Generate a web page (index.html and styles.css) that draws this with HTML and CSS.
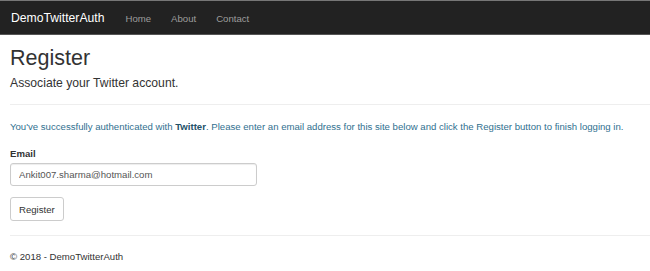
FILE: index.html
```html
<!DOCTYPE html>
<html>
<head>
<meta charset="utf-8">
<title>Register - DemoTwitterAuth</title>
<link rel="stylesheet" href="styles.css">
</head>
<body>
<nav class="navbar">
  <a class="brand" href="#">DemoTwitterAuth</a>
  <ul class="nav">
    <li><a href="#">Home</a></li>
    <li><a href="#">About</a></li>
    <li><a href="#">Contact</a></li>
  </ul>
</nav>
<div class="container">
  <h2 class="title">Register</h2>
  <h4 class="subtitle">Associate your Twitter account.</h4>
  <hr class="rule">
  <p class="info">You've successfully authenticated with <strong>Twitter</strong>. Please enter an email address for this site below and click the Register button to finish logging in.</p>
  <form class="form">
    <div class="form-group">
      <label class="label" for="email">Email</label>
      <input class="input" id="email" type="text" value="Ankit007.sharma@hotmail.com">
    </div>
    <button class="btn" type="button">Register</button>
  </form>
  <hr class="rule">
  <footer class="footer">
    <p class="copy">© 2018 - DemoTwitterAuth</p>
  </footer>
</div>
</body>
</html>
```

FILE: styles.css
```css
* { box-sizing: border-box; }
html, body { margin: 0; padding: 0; }
body {
  font-family: "Liberation Sans", Arial, sans-serif;
  font-size: 9.6px;
  line-height: 1.42857;
  color: #333;
  background: #fff;
}
.navbar {
  display: flex;
  align-items: center;
  height: 35px;
  background: #222;
  border-top: 1px solid #777;
  border-bottom: 1px solid #555;
  padding: 2px 10px 0;
}
.brand {
  color: #fff;
  font-size: 12.2px;
  text-decoration: none;
  margin-right: 11px;
  padding-left: 1px;
}
.nav {
  display: flex;
  list-style: none;
  margin: 0;
  padding: 0;
}
.nav li a {
  display: block;
  padding: 0 10px;
  color: #9d9d9d;
  text-decoration: none;
  font-size: 9.6px;
}
.container {
  padding: 0 0 0 10px;
}
.title {
  font-size: 21.5px;
  font-weight: 500;
  line-height: 1.1;
  margin: 12px 0 6px;
}
.subtitle {
  font-size: 12.2px;
  font-weight: 500;
  line-height: 1.1;
  margin: 0 0 6px;
}
.rule {
  border: 0;
  border-top: 1px solid #eee;
  margin: 14px 0;
  height: 0;
}
.info {
  color: #31708f;
  margin: 0 0 7px;
  padding-top: 1px;
}
.info strong { color: #245269; }
.form { margin: 0; }
.form-group { margin-bottom: 11px; }
.label {
  display: block;
  font-weight: bold;
  margin-bottom: 3px;
  margin-top: 13px;
}
.input {
  display: block;
  width: 247px;
  height: 23px;
  padding: 4px 8px;
  font-family: inherit;
  font-size: 9.6px;
  color: #555;
  border: 1px solid #ccc;
  border-radius: 3px;
  box-shadow: inset 0 1px 1px rgba(0,0,0,.075);
}
.btn {
  display: inline-block;
  vertical-align: top;
  height: 24px;
  padding: 0 8px;
  font-family: inherit;
  font-size: 9.6px;
  color: #333;
  background: #fff;
  border: 1px solid #ccc;
  border-radius: 3px;
}
.copy { margin: 0; }
```
